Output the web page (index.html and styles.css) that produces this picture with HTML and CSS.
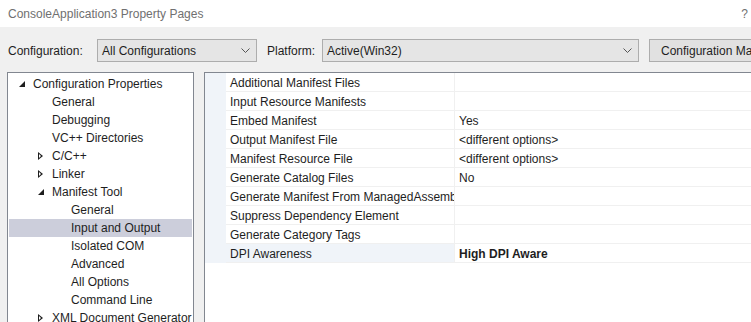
FILE: index.html
```html
<!DOCTYPE html>
<html lang="en">
<head>
    <meta charset="UTF-8">
    <title>ConsoleApplication3 Property Pages</title>
    <link rel="stylesheet" href="styles.css">
</head>
<body>
    <div class="titlebar">
        <span class="title">ConsoleApplication3 Property Pages</span>
        <span class="help">?</span>
    </div>

    <div class="toolbar">
        <label class="field-label">Configuration:</label>
        <div class="combo config-combo">
            <span>All Configurations</span>
            <svg class="chevron" width="9" height="5" viewBox="0 0 9 5"><path d="M0.5 0.5 L4.5 4.5 L8.5 0.5" fill="none" stroke="#555" stroke-width="1"/></svg>
        </div>
        <label class="field-label platform-label">Platform:</label>
        <div class="combo platform-combo">
            <span>Active(Win32)</span>
            <svg class="chevron" width="9" height="5" viewBox="0 0 9 5"><path d="M0.5 0.5 L4.5 4.5 L8.5 0.5" fill="none" stroke="#555" stroke-width="1"/></svg>
        </div>
        <button class="config-button">Configuration Manager...</button>
    </div>

    <div class="panes">
        <div class="tree">
            <div class="node level-0"><span class="exp open"></span>Configuration Properties</div>
            <div class="node level-1"><span class="exp"></span>General</div>
            <div class="node level-1"><span class="exp"></span>Debugging</div>
            <div class="node level-1"><span class="exp"></span>VC++ Directories</div>
            <div class="node level-1"><span class="exp closed"></span>C/C++</div>
            <div class="node level-1"><span class="exp closed"></span>Linker</div>
            <div class="node level-1"><span class="exp open"></span>Manifest Tool</div>
            <div class="node level-2"><span class="exp"></span>General</div>
            <div class="node level-2 selected"><span class="exp"></span>Input and Output</div>
            <div class="node level-2"><span class="exp"></span>Isolated COM</div>
            <div class="node level-2"><span class="exp"></span>Advanced</div>
            <div class="node level-2"><span class="exp"></span>All Options</div>
            <div class="node level-2"><span class="exp"></span>Command Line</div>
            <div class="node level-1"><span class="exp closed"></span>XML Document Generator</div>
        </div>

        <div class="grid">
            <div class="row"><div class="gutter"></div><div class="name">Additional Manifest Files</div><div class="value"></div></div>
            <div class="row"><div class="gutter"></div><div class="name">Input Resource Manifests</div><div class="value"></div></div>
            <div class="row"><div class="gutter"></div><div class="name">Embed Manifest</div><div class="value">Yes</div></div>
            <div class="row"><div class="gutter"></div><div class="name">Output Manifest File</div><div class="value">&lt;different options&gt;</div></div>
            <div class="row"><div class="gutter"></div><div class="name">Manifest Resource File</div><div class="value">&lt;different options&gt;</div></div>
            <div class="row"><div class="gutter"></div><div class="name">Generate Catalog Files</div><div class="value">No</div></div>
            <div class="row"><div class="gutter"></div><div class="name">Generate Manifest From ManagedAssembly</div><div class="value"></div></div>
            <div class="row"><div class="gutter"></div><div class="name">Suppress Dependency Element</div><div class="value"></div></div>
            <div class="row"><div class="gutter"></div><div class="name">Generate Category Tags</div><div class="value"></div></div>
            <div class="row current"><div class="gutter"></div><div class="name">DPI Awareness</div><div class="value bold">High DPI Aware</div></div>
            <div class="grid-fill"><div class="gutter"></div></div>
        </div>
    </div>
</body>
</html>
```

FILE: styles.css
```css
body {
    margin: 0;
    width: 751px;
    height: 322px;
    overflow: hidden;
    font-family: "Liberation Sans", Arial, sans-serif;
    font-size: 12px;
    color: #1e1e1e;
    background-color: #f0f0f0;
}
.titlebar {
    height: 27px;
    background-color: white;
    display: flex;
    align-items: center;
    justify-content: space-between;
    padding: 0 3px 0 8px;
}
.title {
    color: #707070;
}
.help {
    color: #707070;
}
.toolbar {
    display: flex;
    align-items: center;
    padding: 12px 0 0 8px;
    height: 23px;
    white-space: nowrap;
    overflow: hidden;
}
.toolbar > * {
    flex-shrink: 0;
}
.field-label {
    width: 89px;
}
.platform-label {
    width: 55px;
    margin-left: 10px;
}
.combo {
    height: 21px;
    border: 1px solid #adadad;
    background-color: #e5e5e5;
    display: flex;
    align-items: center;
    justify-content: space-between;
    padding: 0 6px 0 4px;
    box-sizing: content-box;
}
.config-combo {
    width: 148px;
}
.platform-combo {
    width: 305px;
}
.chevron {
    display: block;
}
.config-button {
    margin-left: 10px;
    height: 23px;
    border: 1px solid #adadad;
    background-color: #e1e1e1;
    font-family: inherit;
    font-size: 12px;
    color: #1e1e1e;
    padding: 0 11px;
    white-space: nowrap;
}
.panes {
    display: flex;
    gap: 10px;
    margin-top: 10px;
    padding-left: 7px;
    overflow: hidden;
}
.tree {
    width: 185px;
    height: 260px;
    flex-shrink: 0;
    background-color: white;
    border: 1px solid #828790;
    border-bottom: none;
    padding-top: 2px;
}
.node {
    height: 18px;
    line-height: 18px;
    display: flex;
    align-items: center;
    white-space: nowrap;
    margin: 0 1px;
}
.node.selected {
    background-color: #cccedb;
}
.level-0 { padding-left: 9px; }
.level-1 { padding-left: 28px; }
.level-2 { padding-left: 47px; }
.exp {
    width: 15px;
    height: 18px;
    flex-shrink: 0;
    position: relative;
}
.exp.open::before {
    content: "";
    position: absolute;
    left: 1px;
    top: 6px;
    border-style: solid;
    border-width: 0 0 6px 6px;
    border-color: transparent transparent #1e1e1e transparent;
}
.exp.closed::before {
    content: "";
    position: absolute;
    left: 1px;
    top: 5px;
    width: 0;
    height: 0;
    border-style: solid;
    border-width: 4px 0 4px 5px;
    border-color: transparent transparent transparent #1e1e1e;
}
.exp.closed::after {
    content: "";
    position: absolute;
    left: 2px;
    top: 7px;
    border-style: solid;
    border-width: 2px 0 2px 2px;
    border-color: transparent transparent transparent white;
}
.grid {
    flex: 1;
    height: 260px;
    background-color: white;
    border: 1px solid #828790;
    border-bottom: none;
    border-right: none;
    display: flex;
    flex-direction: column;
    min-width: 0;
}
.row {
    display: flex;
    height: 19px;
    line-height: 20px;
    flex-shrink: 0;
}
.gutter {
    width: 21px;
    flex-shrink: 0;
    background-color: #f0f4f9;
}
.name {
    width: 224px;
    flex-shrink: 0;
    padding-left: 4px;
    border-right: 1px solid #f0f0f0;
    border-bottom: 1px solid #f0f0f0;
    overflow: hidden;
    white-space: nowrap;
}
.value {
    flex: 1;
    padding-left: 4px;
    border-bottom: 1px solid #f0f0f0;
    white-space: nowrap;
}
.row.current .name {
    background-color: #f0f4f9;
}
.bold {
    font-weight: bold;
}
.grid-fill {
    flex: 1;
    display: flex;
}
.grid-fill .gutter {
    background-color: white;
}
```
